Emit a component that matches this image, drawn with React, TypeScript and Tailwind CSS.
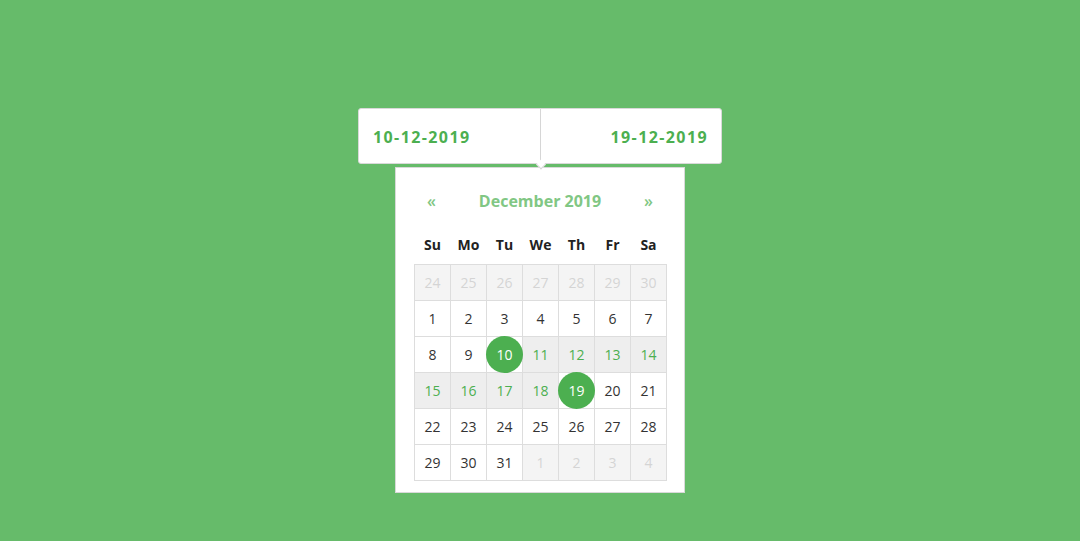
import React from 'react';

type Day = { n: number; muted?: boolean };

const WEEKDAYS = ['Su', 'Mo', 'Tu', 'We', 'Th', 'Fr', 'Sa'];
const START = 10;
const END = 19;

// December 2019 grid, padded with the trailing/leading days of the neighbouring months
const buildWeeks = (): Day[][] => {
  const days: Day[] = [];
  for (let d = 24; d <= 30; d++) days.push({ n: d, muted: true });
  for (let d = 1; d <= 31; d++) days.push({ n: d });
  for (let d = 1; d <= 4; d++) days.push({ n: d, muted: true });
  const weeks: Day[][] = [];
  for (let i = 0; i < days.length; i += 7) weeks.push(days.slice(i, i + 7));
  return weeks;
};

const DayCell: React.FC<{ day: Day }> = ({ day }) => {
  const inMonth = !day.muted;
  const isEdge = inMonth && (day.n === START || day.n === END);
  const inRange = inMonth && day.n > START && day.n < END;

  let cls = 'bg-white text-[#333]';
  if (day.muted) cls = 'bg-[#f4f4f4] text-[#d4d4d4]';
  else if (inRange) cls = 'bg-[#eeeeee] text-[#4caf50]';

  return (
    <td className={`relative h-[36px] p-0 border border-[#dddddd] text-center align-middle ${cls}`}>
      {isEdge ? (
        <span className="absolute -inset-px flex items-center justify-center rounded-full bg-[#4caf50] text-white">
          {day.n}
        </span>
      ) : (
        day.n
      )}
    </td>
  );
};

const App: React.FC = () => {
  const weeks = buildWeeks();

  return (
    <div
      className="w-full h-[541px] bg-[#66bb6a] flex flex-col items-center pt-[108px] overflow-hidden"
      style={{ fontFamily: '"Open Sans", "Noto Sans", sans-serif' }}
    >
      {/* range inputs */}
      <div className="relative flex w-[364px] h-[56px] bg-white border border-[#d9d9d9] rounded-[3px]">
        <div className="flex-1 flex items-center pl-[14px] pt-[2px] text-[16px] font-bold tracking-[1.4px] text-[#4caf50]">
          10-12-2019
        </div>
        <div className="relative w-px bg-[#d6d6d6]">
          <span className="absolute left-1/2 -bottom-[5px] w-[7px] h-[7px] -translate-x-1/2 rotate-45 bg-white border-r border-b border-[#d6d6d6]" />
        </div>
        <div className="flex-1 flex items-center justify-end pr-[13px] pt-[2px] text-[16px] font-bold tracking-[1.4px] text-[#4caf50]">
          19-12-2019
        </div>
      </div>

      {/* calendar popup */}
      <div className="mt-[3px] w-[290px] bg-white border border-black/15 px-[18px] pb-[11px]">
        <div className="flex items-center justify-between h-[66px] px-[13px] text-[#81c784]">
          <span className="text-[16px] font-semibold">«</span>
          <span className="text-[16px] font-bold">December 2019</span>
          <span className="text-[16px] font-semibold">»</span>
        </div>
        <table className="w-[253px] table-fixed border-collapse text-[14px]">
          <thead>
            <tr>
              {WEEKDAYS.map(w => (
                <th key={w} className="h-[30px] p-0 pb-[2px] font-bold text-[14px] text-[#222] text-center align-top">
                  {w}
                </th>
              ))}
            </tr>
          </thead>
          <tbody>
            {weeks.map((week, i) => (
              <tr key={i}>
                {week.map((day, j) => (
                  <DayCell key={j} day={day} />
                ))}
              </tr>
            ))}
          </tbody>
        </table>
      </div>
    </div>
  );
};

export default App;
